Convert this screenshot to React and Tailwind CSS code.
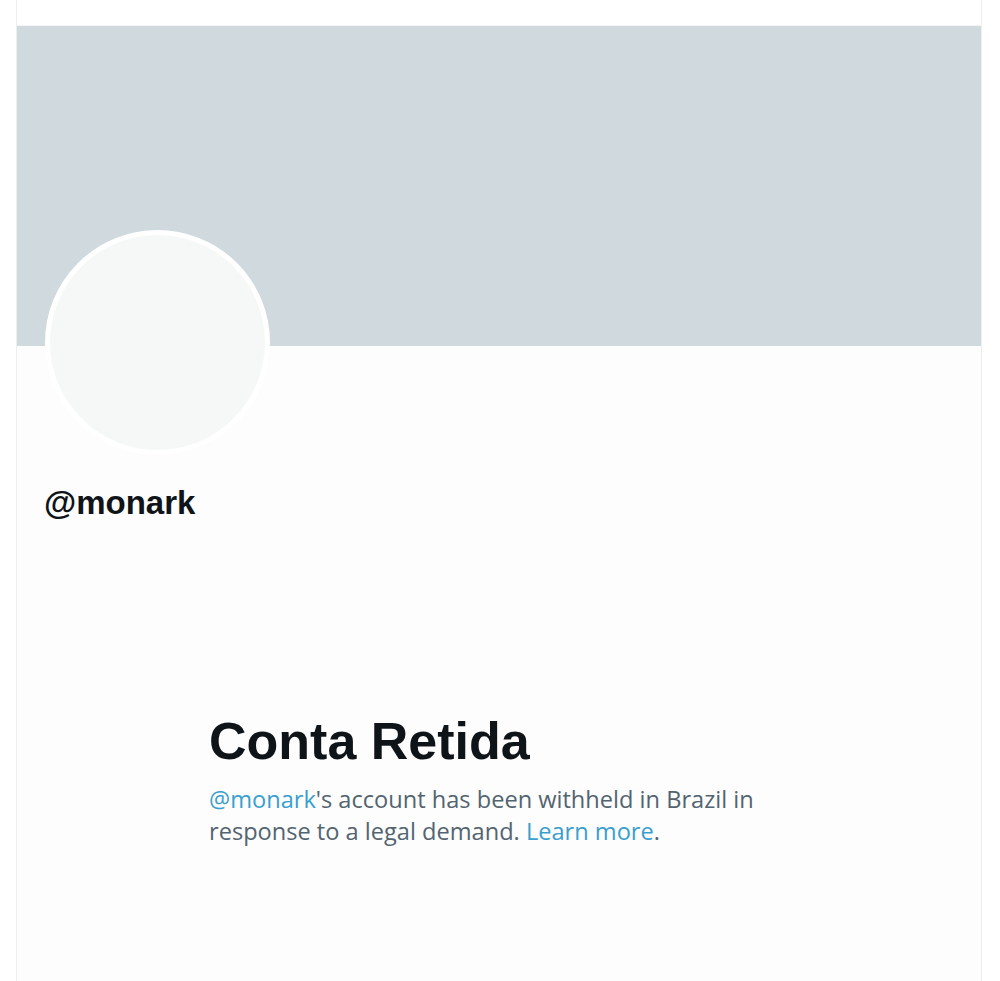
export default function App() {
  return (
    <div className="min-h-[981px] w-full bg-white" style={{ fontFamily: '"Liberation Sans", Arial, sans-serif' }}>
      <div className="ml-[16px] w-[966px] min-h-[981px] border-x border-[#eceeef] bg-[#fdfdfd]">
        <div className="h-[26px] bg-white border-b border-[#f2f4f5]" />
        <div className="h-[320px] bg-[#cfd9de]" />
        <div className="relative">
          <div className="absolute left-[28px] -top-[116px] h-[225px] w-[225px] rounded-full border-[5px] border-white bg-[#f6f8f8]" />
          <div className="pt-[137px] pl-[27px]">
            <div className="text-[33px] font-bold leading-[40px] text-[#0f1419]">@monark</div>
          </div>
          <div className="mt-[188px] ml-[192px] w-[660px]">
            <h1 className="text-[52px] font-bold leading-[60px] text-[#0f1419]">Conta Retida</h1>
            <p className="mt-[12px] text-[23.6px] leading-[32px] text-[#536471]" style={{ fontFamily: '"Open Sans", sans-serif' }}>
              <span className="text-[#3a9fcf]">@monark</span>'s account has been withheld in Brazil in
              <br />
              response to a legal demand. <span className="text-[#3a9fcf]">Learn more</span>.
            </p>
          </div>
        </div>
      </div>
    </div>
  );
}
